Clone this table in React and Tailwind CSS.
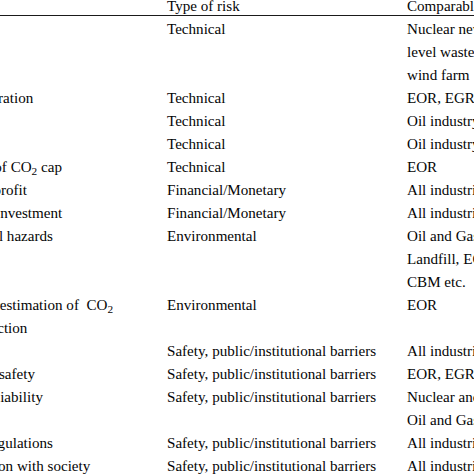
import React from 'react';

// risk table, cropped on the left and right like the source scan
const rows = [
  { risk: ['Scale'], type: 'Technical', comp: ['Nuclear new build, high', 'level waste disposal,', 'wind farm'] },
  { risk: ['Exploration'], type: 'Technical', comp: ['EOR, EGR, ECBM'] },
  { risk: ['Wells'], type: 'Technical', comp: ['Oil industry'] },
  { risk: ['Leaks'], type: 'Technical', comp: ['Oil industry'] },
  { risk: [<>Loss of CO<sub>2</sub> cap</>], type: 'Technical', comp: ['EOR'] },
  { risk: ['Low profit'], type: 'Financial/Monetary', comp: ['All industries'] },
  { risk: ['High investment'], type: 'Financial/Monetary', comp: ['All industries'] },
  { risk: ['Global hazards'], type: 'Environmental', comp: ['Oil and Gas industry,', 'Landfill, EOR,', 'CBM etc.'] },
  { risk: [<>Underestimation of&nbsp; CO<sub>2</sub></>, 'production'], type: 'Environmental', comp: ['EOR'] },
  { risk: ['Fraud'], type: 'Safety, public/institutional barriers', comp: ['All industries'] },
  { risk: ['Work safety'], type: 'Safety, public/institutional barriers', comp: ['EOR, EGR, ECBM'] },
  { risk: ['Civil liability'], type: 'Safety, public/institutional barriers', comp: ['Nuclear and', 'Oil and Gas'] },
  { risk: ['EU regulations'], type: 'Safety, public/institutional barriers', comp: ['All industries'] },
  { risk: ['Relation with society'], type: 'Safety, public/institutional barriers', comp: ['All industries'] },
];

const Lines = ({ items }) => (
  <div className="flex flex-col">
    {items.map((t, i) => (
      <span key={i} className="whitespace-nowrap">{t}</span>
    ))}
  </div>
);

const App = () => {
  return (
    <div className="w-[474px] h-[474px] overflow-hidden bg-white text-[#050505] text-[15.1px] leading-[23px] font-['Liberation_Serif','Times_New_Roman',serif]">
      <div className="w-[700px] ml-[-38px] mt-[-3px]">
        <div className="grid grid-cols-[205px_240px_255px] leading-[18px] border-b-[1.5px] border-[#1a1a1a]">
          <span className="whitespace-nowrap">Risk</span>
          <span className="whitespace-nowrap">Type of risk</span>
          <span className="whitespace-nowrap">Comparable industries</span>
        </div>
        <div className="pt-[2px]">
          {rows.map((r, i) => (
            <div key={i} className="grid grid-cols-[205px_240px_255px]">
              <Lines items={r.risk} />
              <span className="whitespace-nowrap">{r.type}</span>
              <Lines items={r.comp} />
            </div>
          ))}
        </div>
      </div>
    </div>
  );
};

export default App;
